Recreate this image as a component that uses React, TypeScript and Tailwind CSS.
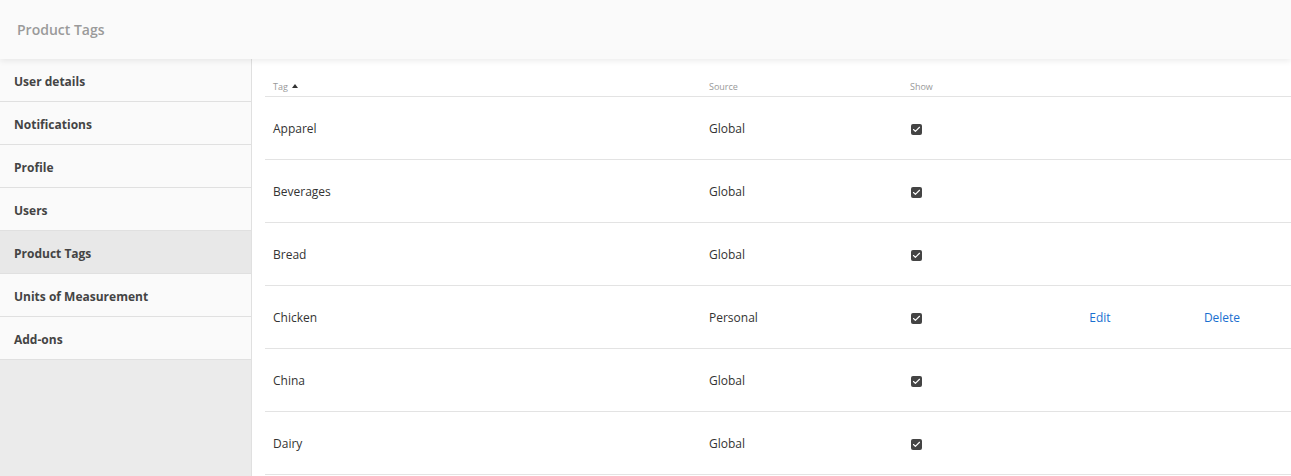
import { Check } from 'lucide-react';

const NAV = ['User details', 'Notifications', 'Profile', 'Users', 'Product Tags', 'Units of Measurement', 'Add-ons'];

const TAGS = [
  { name: 'Apparel', source: 'Global' },
  { name: 'Beverages', source: 'Global' },
  { name: 'Bread', source: 'Global' },
  { name: 'Chicken', source: 'Personal', editable: true },
  { name: 'China', source: 'Global' },
  { name: 'Dairy', source: 'Global' },
];

function Checkbox() {
  return (
    <span className="inline-flex h-[11px] w-[11px] items-center justify-center rounded-[2px] bg-[#444]">
      <Check size={9} strokeWidth={3} className="text-white" />
    </span>
  );
}

export default function App() {
  return (
    <div className="h-[476px] overflow-hidden bg-white text-[#333]" style={{ fontFamily: '"Open Sans", sans-serif' }}>
      {/* top bar */}
      <div className="relative z-10 flex h-[59px] items-center bg-[#fafafa] px-[17px] shadow-[0_2px_6px_rgba(0,0,0,0.08)]">
        <h1 className="text-[14px] font-semibold text-[#9a9a9a]">Product Tags</h1>
      </div>

      <div className="flex h-[417px]">
        {/* settings nav */}
        <nav className="w-[252px] shrink-0 border-r border-[#e0e0e0] bg-[#ebebeb]">
          {NAV.map((item) => (
            <div
              key={item}
              className={
                item === 'Product Tags'
                  ? 'flex h-[43px] items-center border-b border-[#e0e0e0] bg-[#e8e8e8] px-[14px] pt-[3px] text-[12px] font-bold text-[#444]'
                  : 'flex h-[43px] items-center border-b border-[#e0e0e0] bg-[#fafafa] px-[14px] pt-[3px] text-[12px] font-bold text-[#444]'
              }
            >
              {item}
            </div>
          ))}
        </nav>

        {/* tags table */}
        <div className="flex-1 pl-[13px]">
          <div className="flex h-[38px] items-end border-b border-[#e3e3e3] pb-[3px] text-[9px] text-[#999]">
            <div className="flex w-[436px] items-center gap-[4px] pl-[8px]">
              Tag
              <span className="h-0 w-0 border-x-[3.5px] border-b-[4px] border-x-transparent border-b-[#333]" />
            </div>
            <div className="w-[201px] pl-[8px]">Source</div>
            <div className="pl-[8px]">Show</div>
          </div>
          {TAGS.map((t) => (
            <div key={t.name} className="flex h-[63px] items-center border-b border-[#e3e3e3] pt-[2px] text-[12px] text-[#333]">
              <div className="w-[436px] pl-[8px]">{t.name}</div>
              <div className="w-[201px] pl-[8px]">{t.source}</div>
              <div className="flex w-[138px] pl-[9px]">
                <Checkbox />
              </div>
              {t.editable && (
                <div className="flex flex-1 text-[#1a6fd0]">
                  <span className="w-[120px] text-center">Edit</span>
                  <span className="w-[124px] text-center">Delete</span>
                </div>
              )}
            </div>
          ))}
        </div>
      </div>
    </div>
  );
}
